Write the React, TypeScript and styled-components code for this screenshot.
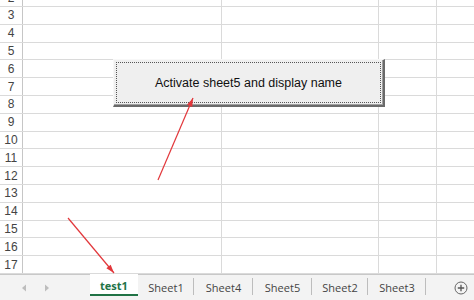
import React from 'react';
import styled, { createGlobalStyle } from 'styled-components';

const GlobalStyle = createGlobalStyle`
  html, body {
    margin: 0;
    padding: 0;
    background: #ffffff;
    overflow: hidden;
  }
`;

const ROW_H = 17.8;
const COLS = [199, 157, 58, 80];

const Page = styled.div`
  position: relative;
  width: 474px;
  height: 300px;
  overflow: hidden;
  display: flex;
  flex-direction: column;
  font-family: 'Liberation Sans', Arial, sans-serif;
`;

const Grid = styled.div`
  flex: 1;
  display: flex;
  flex-direction: column;
  justify-content: flex-end;
  overflow: hidden;
`;

const Row = styled.div`
  display: flex;
  height: ${ROW_H}px;
  flex-shrink: 0;
  box-sizing: border-box;
  border-bottom: 1px solid #dadada;
`;

const RowHeader = styled.div`
  width: 23px;
  flex-shrink: 0;
  box-sizing: border-box;
  border-right: 1px solid #c6c6c6;
  display: flex;
  align-items: center;
  justify-content: center;
  font-size: 12px;
  color: #444;
`;

const Cell = styled.div<{ $w: number }>`
  width: ${({ $w }) => $w}px;
  flex-shrink: 0;
  box-sizing: border-box;
  border-right: 1px solid #dadada;
`;

const MacroButton = styled.div`
  position: absolute;
  left: 113px;
  top: 59px;
  width: 272px;
  height: 48px;
  box-sizing: border-box;
  background: #efefef;
  border-top: 1px solid #f8f8f8;
  border-left: 1px solid #f8f8f8;
  border-right: 2px solid #6a6a6a;
  border-bottom: 2px solid #6a6a6a;
  padding: 2px;
  box-shadow: inset -1px -1px 0 #a0a0a0;
`;

const FocusRect = styled.div`
  height: 100%;
  box-sizing: border-box;
  border: 1px dotted #555;
  display: flex;
  align-items: center;
  justify-content: center;
  font-size: 12.5px;
  color: #111;
`;

const Overlay = styled.svg`
  position: absolute;
  left: 0;
  top: 0;
  pointer-events: none;
`;

const TabBar = styled.div`
  height: 26px;
  flex-shrink: 0;
  box-sizing: border-box;
  border-top: 1px solid #c8c8c8;
  background: #f3f3f3;
  display: flex;
  align-items: stretch;
  font-family: 'Open Sans', 'Noto Sans', sans-serif;
`;

const NavArea = styled.div`
  width: 90px;
  display: flex;
  align-items: center;
  padding-left: 21px;
  gap: 17px;
  box-sizing: border-box;
`;

const Tab = styled.div<{ $w: number; $active?: boolean }>`
  width: ${({ $w }) => $w}px;
  box-sizing: border-box;
  display: flex;
  align-items: center;
  justify-content: center;
  font-size: 11px;
  position: relative;
  margin-top: -1px;
  color: ${({ $active }) => ($active ? '#217346' : '#444')};
  font-weight: ${({ $active }) => ($active ? 700 : 400)};
  background: ${({ $active }) => ($active ? '#ffffff' : 'transparent')};
  border-bottom: ${({ $active }) => ($active ? '2px solid #217346' : 'none')};
  margin-bottom: ${({ $active }) => ($active ? '4px' : '0')};
  padding-top: ${({ $active }) => ($active ? '2px' : '0')};
  &::after {
    content: '';
    display: ${({ $active }) => ($active ? 'none' : 'block')};
    position: absolute;
    right: 0;
    top: 4px;
    bottom: 5px;
    width: 1px;
    background: #bdbdbd;
  }
`;

const AddArea = styled.div`
  flex: 1;
  display: flex;
  align-items: center;
  justify-content: flex-end;
  padding-right: 6px;
`;

const rows = Array.from({ length: 16 }, (_, i) => i + 2);

const tabs = [
  { name: 'test1', w: 48, active: true },
  { name: 'Sheet1', w: 56 },
  { name: 'Sheet4', w: 59 },
  { name: 'Sheet5', w: 59 },
  { name: 'Sheet2', w: 56 },
  { name: 'Sheet3', w: 58 },
];

const Arrow: React.FC<{ x1: number; y1: number; x2: number; y2: number }> = ({ x1, y1, x2, y2 }) => {
  const a = Math.atan2(y2 - y1, x2 - x1);
  const len = 9;
  const spread = 0.32;
  const p1 = [x2 - len * Math.cos(a - spread), y2 - len * Math.sin(a - spread)];
  const p2 = [x2 - len * Math.cos(a + spread), y2 - len * Math.sin(a + spread)];
  return (
    <g>
      <line x1={x1} y1={y1} x2={x2} y2={y2} stroke="#e2373b" strokeWidth={1.2} />
      <polygon points={`${x2},${y2} ${p1[0]},${p1[1]} ${p2[0]},${p2[1]}`} fill="#e2373b" />
    </g>
  );
};

const App: React.FC = () => {
  return (
    <Page>
      <GlobalStyle />
      <Grid>
        {rows.map((r) => (
          <Row key={r}>
            <RowHeader>{r}</RowHeader>
            {COLS.map((w, i) => (
              <Cell key={i} $w={w} />
            ))}
          </Row>
        ))}
      </Grid>

      <TabBar>
        <NavArea>
          <svg width="6" height="8" viewBox="0 0 6 8">
            <path d="M5 0.5 L1 4 L5 7.5 Z" fill="#bdbdbd" />
          </svg>
          <svg width="6" height="8" viewBox="0 0 6 8">
            <path d="M1 0.5 L5 4 L1 7.5 Z" fill="#bdbdbd" />
          </svg>
        </NavArea>
        {tabs.map((t) => (
          <Tab key={t.name} $w={t.w} $active={t.active}>
            {t.name}
          </Tab>
        ))}
        <AddArea>
          <svg width="14" height="14" viewBox="0 0 14 14">
            <circle cx="7" cy="7" r="6" fill="none" stroke="#666" strokeWidth="1" />
            <path d="M7 3.8 V10.2 M3.8 7 H10.2" stroke="#555" strokeWidth="1.3" />
          </svg>
        </AddArea>
      </TabBar>

      <MacroButton>
        <FocusRect>Activate sheet5 and display name</FocusRect>
      </MacroButton>

      <Overlay width="474" height="300">
        <Arrow x1={158} y1={180} x2={193} y2={98} />
        <Arrow x1={68} y1={218} x2={114} y2={273} />
      </Overlay>
    </Page>
  );
};

export default App;
